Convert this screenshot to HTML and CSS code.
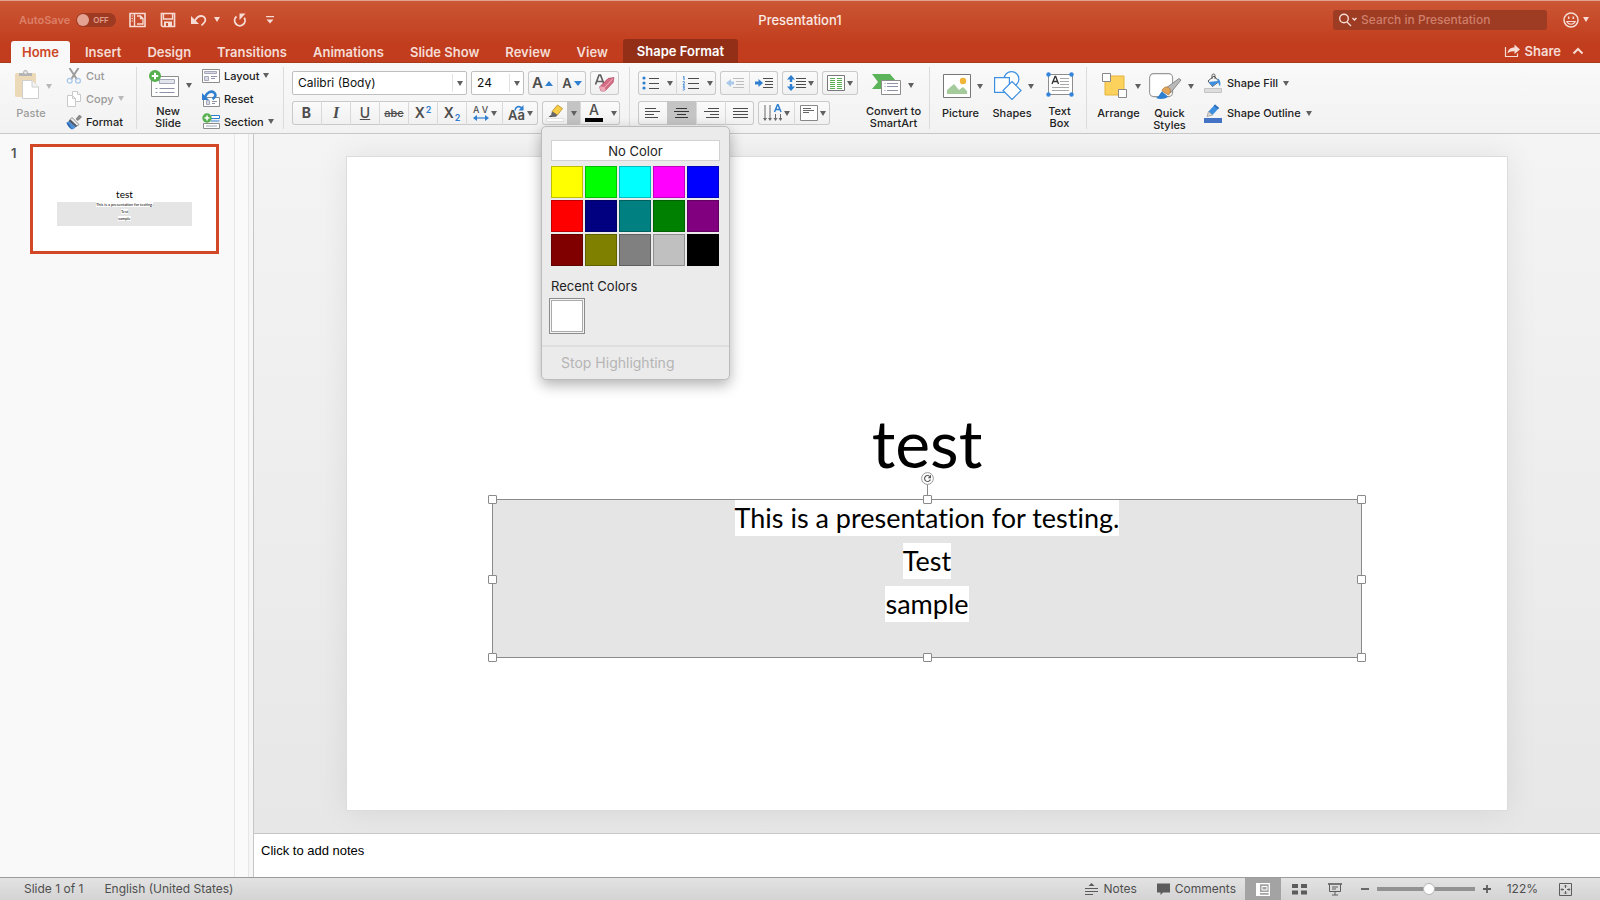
FILE: index.html
```html
<!DOCTYPE html>
<html lang="en">
	<head>
		<meta charset="utf-8">
		<title>Presentation1</title>
		<link rel="stylesheet" href="styles.css">
	</head>
	<body>
		<header class="header">
			<div class="titlebar">
				<div class="quick">
					<label class="autosave">AutoSave
						<input type="checkbox" disabled>
						<span class="switch">OFF</span>
					</label>
					<button type="button" class="quick_btn" aria-label="Presentation gallery"><svg width="17" height="16" viewBox="0 0 17 16"><path d="M1 1.500h15v13H1z" fill="none" stroke="#f6dcd5" stroke-width="1.600"/><path d="M5.500 1v13" stroke="#f6dcd5" stroke-width="1.400"/><path d="M2.500 4h1.500M2.500 6.500h1.500M2.500 9h1.500" stroke="#f6dcd5"/><path d="M8 4h3.500L14 6.500v5.500H8M11.500 4v2.700H14" fill="none" stroke="#f6dcd5" stroke-width="1.300"/></svg></button>
					<button type="button" class="quick_btn" aria-label="Save"><svg width="16" height="16" viewBox="0 0 16 16"><path d="M1.500 1.500h13v13h-12l-1-1z" fill="none" stroke="#f6dcd5" stroke-width="1.700"/><path d="M3.500 1.500v5.500h9V1.500" fill="none" stroke="#f6dcd5" stroke-width="1.300"/><path d="M4 9.500h8v5H4z" fill="#f6dcd5"/><path d="M6 11h2v3H6z" fill="#c44a2a"/></svg></button>
					<button type="button" class="quick_btn" aria-label="Undo"><svg width="16" height="16" viewBox="0 0 16 16"><path d="M0 4v8h8z" fill="#f6dcd5"/><path d="M4 8.500C6 5 9 3.500 11.500 4.200c3 .9 3.700 4.300 1.800 6.300L10.500 13.500" fill="none" stroke="#f6dcd5" stroke-width="1.800"/></svg></button>
					<button type="button" class="quick_arrow" aria-label="Undo history"><span class="caret caret-light"></span></button>
					<button type="button" class="quick_btn" aria-label="Repeat"><svg width="16" height="16" viewBox="0 0 16 16"><path d="M4.500 4.500A5.200 5.200 0 1 0 12.300 5.800" fill="none" stroke="#f6dcd5" stroke-width="1.900"/><path d="M7.500 1.500v6.500L13.500 1.500z" fill="#f6dcd5"/></svg></button>
					<button type="button" class="quick_btn customize" aria-label="Customize toolbar"><svg width="10" height="8" viewBox="0 0 10 8"><path d="M1 .5h8" stroke="#f6dcd5" stroke-width="1.400"/><path d="M1.500 3.500h7L5 7.500z" fill="#f6dcd5"/></svg></button>
				</div>
				<h1 class="doc_name">Presentation1</h1>
				<div class="title_right">
					<label class="search">
						<svg width="20" height="14" viewBox="0 0 20 14"><circle cx="6" cy="5.500" r="4.300" fill="none" stroke="#f6dcd5" stroke-width="1.400"/><path d="M9 9l4 4M14.500 5l2 2 2-2" fill="none" stroke="#f6dcd5" stroke-width="1.400"/></svg>
						<input type="search" placeholder="Search in Presentation" aria-label="Search in Presentation">
					</label>
					<button type="button" class="smile" aria-label="Feedback"><svg width="16" height="16" viewBox="0 0 16 16"><circle cx="8" cy="8" r="7" fill="none" stroke="#f6dcd5" stroke-width="1.500"/><path d="M5.700 4.500v2.500M10.300 4.500v2.500" stroke="#f6dcd5" stroke-width="1.500"/><path d="M3.800 9.500c1.600 3.600 6.800 3.600 8.400 0z" fill="none" stroke="#f6dcd5" stroke-width="1.100"/></svg><span class="caret caret-light"></span></button>
				</div>
			</div>
			<nav class="tabs">
				<ul>
					<li class="on"><button type="button">Home</button></li>
					<li><button type="button">Insert</button></li>
					<li><button type="button">Design</button></li>
					<li><button type="button">Transitions</button></li>
					<li><button type="button">Animations</button></li>
					<li><button type="button">Slide Show</button></li>
					<li><button type="button">Review</button></li>
					<li><button type="button">View</button></li>
					<li class="context"><button type="button">Shape Format</button></li>
				</ul>
				<div class="share">
					<button type="button"><svg width="17" height="14" viewBox="0 0 17 14"><path d="M1.500 3v9.500h12V9.500" fill="none" stroke="#f6dcd5" stroke-width="1.200"/><path d="M3.500 9.500C4 5.500 6.500 3.500 10.500 3.500V.500L16 5.500l-5.500 4.500V7.200C7.500 7 5.300 7.600 3.500 9.500z" fill="#f6dcd5"/></svg>Share</button>
					<button type="button" aria-label="Collapse ribbon"><svg width="12" height="8" viewBox="0 0 12 8"><path d="M1.500 6.500L6 2l4.500 4.500" fill="none" stroke="#f6dcd5" stroke-width="2"/></svg></button>
				</div>
			</nav>
		</header>

		<div class="ribbon">
			<div class="group group-clipboard">
				<button type="button" class="big paste" disabled>
					<span class="big_icon"><svg width="26" height="32" viewBox="0 0 26 32"><rect x="1" y="4" width="21" height="24" rx="1.500" fill="#ecd9b8"/><path d="M5 7V4h4c0-4 5-4 5 0h4v3z" fill="#b4b4b4"/><circle cx="11.500" cy="3.500" r="1.200" fill="#f6f6f6"/><path d="M8.500 11.500H18l6.500 6.500v11.500h-16z" fill="#fff" stroke="#cfcfcf"/><path d="M18 11.500V18h6.500" fill="#f3f3f3" stroke="#cfcfcf"/></svg><span class="caret caret-dim"></span></span>
					Paste
				</button>
				<div class="stack">
					<button type="button" disabled><svg width="16" height="16" viewBox="0 0 16 16"><path d="M3.500 0L11 11.500M12.500 0L5 11.500" stroke="#9a9a9a" stroke-width="1.900"/><circle cx="3.700" cy="12.700" r="2.400" fill="none" stroke="#a9c7ea" stroke-width="1.300"/><circle cx="12" cy="12.700" r="2.400" fill="none" stroke="#a9c7ea" stroke-width="1.300"/></svg>Cut</button>
					<button type="button" disabled><svg width="16" height="16" viewBox="0 0 16 16"><path d="M6.500 4.500V.500h5l3 3v7H9.500" fill="#fff" stroke="#c9c9c9"/><path d="M1.500 4.500h5l3 3v8h-8zM6.500 4.500v3h3M11.500.500v3h3" fill="#fff" stroke="#c9c9c9"/></svg>Copy<span class="caret caret-dim"></span></button>
					<button type="button"><svg width="16" height="16" viewBox="0 0 16 16"><path d="M10 5l3.500-4L15.500 3 12 6.500z" fill="#8b8b8b" stroke="#666" stroke-width=".6"/><path d="M6 3.500l7 7-2 1.500-7-6.500z" fill="#e8e8e8" stroke="#777" stroke-width=".8"/><path d="M4 5.500l7 6.500c-1.500 1.500-3 3-5 3.500C3.500 14 1.500 11.500.500 8.500 2 8 3 7 4 5.500z" fill="#4e8fd6"/><path d="M4 5.500l7 6.500-1 1L2.800 7z" fill="#565656"/><path d="M6 15.500C3.500 14 1.500 11.500.500 8.500L3 10z" fill="#235fa8"/></svg>Format</button>
				</div>
			</div>

			<div class="group group-slides">
				<button type="button" class="big newslide">
					<span class="big_icon"><svg width="31" height="28" viewBox="0 0 31 28"><path d="M2.500 6.500h27v20h-27z" fill="#fff" stroke="#8d8d8d"/><path d="M10.500 9.500h15v4h-15z" fill="#e4e6ee" stroke="#a4a8ba"/><path d="M6.500 18.500h2M10.500 18.500h15M6.500 22.500h2M10.500 22.500h15" stroke="#8e93a8"/><circle cx="6" cy="6" r="6" fill="#56b04f"/><path d="M6 2.800v6.400M2.800 6h6.400" stroke="#fff" stroke-width="2"/></svg><span class="caret"></span></span>
					New<br>Slide
				</button>
				<div class="stack">
					<button type="button"><svg width="18" height="16" viewBox="0 0 18 16"><path d="M.5 1.500h17v13H.5z" fill="#fff" stroke="#8d8d8d"/><path d="M2.500 3.500h12v2h-12z" fill="#d7d9e4" stroke="#a4a8ba"/><path d="M2.500 8.500h4v4h-4z" fill="#d7d9e4" stroke="#a4a8ba"/><path d="M9 8.500h6M9 10.500h4" stroke="#8e93a8"/></svg>Layout<span class="caret"></span></button>
					<button type="button"><svg width="18" height="17" viewBox="0 0 18 17"><path d="M1.500 7.500h16v9h-16z" fill="#fff" stroke="#8d8d8d"/><path d="M4.500 10.500h3v4h-3z" fill="#d7d9e4" stroke="#a4a8ba"/><path d="M10 11.500h5M10 13.500h3" stroke="#8e93a8"/><path d="M0 3v7h7z" fill="#2f7fd0"/><path d="M3 7C5 2 9.500.500 12 2.500s1.500 5-1.500 6.500" fill="none" stroke="#2f7fd0" stroke-width="2.600"/></svg>Reset</button>
					<button type="button"><svg width="18" height="17" viewBox="0 0 18 17"><path d="M1.500 10.500h16v5h-16z" fill="#fff" stroke="#8d8d8d"/><path d="M4 13h11" stroke="#a4a8ba"/><path d="M9 2.500h8.500v3H9M9 8h8.500" fill="#fff" stroke="#2f7fd0"/><circle cx="5" cy="5" r="4.700" fill="#56b04f"/><path d="M5 2.500v5M2.500 5h5" stroke="#fff" stroke-width="1.500"/></svg>Section<span class="caret"></span></button>
				</div>
			</div>

			<div class="group group-font">
				<div class="tool_row">
					<div class="combo combo-font">
						<select aria-label="Font"><option>Calibri (Body)</option></select>
						<span class="caret"></span>
					</div>
					<div class="combo combo-size">
						<select aria-label="Font size"><option>24</option></select>
						<span class="caret"></span>
					</div>
					<div class="seg">
						<button type="button" class="w29 letter" aria-label="Increase font size">A<svg width="8" height="5" viewBox="0 0 8 5"><path d="M0 5h8L4 0z" fill="#2f7fd0"/></svg></button>
						<button type="button" class="w29 letter small" aria-label="Decrease font size">A<svg width="8" height="5" viewBox="0 0 8 5"><path d="M0 0h8L4 5z" fill="#2f7fd0"/></svg></button>
					</div>
					<div class="seg">
						<button type="button" class="w29" aria-label="Clear formatting"><svg width="22" height="20" viewBox="0 0 22 20"><path d="M1.500 11.500L5 2h1.500L10 11M3 8.500h5.500" fill="none" stroke="#606060" stroke-width="1.700"/><path d="M5.500 14L14 5.500l6-1L19 9.500 11 18H7z" fill="#d56c83" stroke="#a84a60" stroke-width=".7"/><path d="M5.500 14l5 .5 8.500-9M10.500 14.500L11 18" fill="none" stroke="#f3b7c4"/><path d="M5.500 14l5 .5.5 3.500H7z" fill="#eda7b6"/></svg></button>
					</div>
				</div>
				<div class="tool_row">
					<div class="seg">
						<button type="button" class="w29"><b>B</b></button>
						<button type="button" class="w29 serif"><i>I</i></button>
						<button type="button" class="w29"><u>U</u></button>
						<button type="button" class="w29 strike"><s>abc</s></button>
						<button type="button" class="w29 script">X<sup>2</sup></button>
						<button type="button" class="w29 script">X<sub>2</sub></button>
						<button type="button" class="w36 kern" aria-label="Character spacing"><span>A V<svg width="16" height="6" viewBox="0 0 16 6"><path d="M2 3h12" stroke="#2f7fd0" stroke-width="1.200"/><path d="M0 3l4-3v6zM16 3l-4-3v6z" fill="#2f7fd0"/></svg></span><span class="caret"></span></button>
						<button type="button" class="w36 case" aria-label="Change case"><span>Aa<svg width="10" height="7" viewBox="0 0 10 7"><path d="M1 5.500C1.500 1.500 5 .5 8 3" fill="none" stroke="#2f7fd0" stroke-width="1.600"/><path d="M9.500 0v5.500H4.500z" fill="#2f7fd0"/></svg></span><span class="caret"></span></button>
					</div>
					<div class="seg seg-popup">
						<button type="button" class="w25" aria-label="Highlight color"><svg width="18" height="18" viewBox="0 0 18 18"><path d="M6 7.500L11.500 1 16.500 4.500 11.500 11z" fill="#f7cd46" stroke="#b38c2a" stroke-width=".8"/><path d="M6 7.500l5.500 3.500-1.500 1.800-2.500.2-2.500-2z" fill="#666"/><path d="M5 11l2.500 2H2.500z" fill="#4f4f4f"/><path d="M.5 14.500h17v3H.5z" fill="#fff" stroke="#ddd" stroke-width=".8"/></svg></button>
						<button type="button" class="w13 on" aria-label="Highlight menu"><span class="caret"></span></button>
						<button type="button" class="w27 fontcolor" aria-label="Font color">A</button>
						<button type="button" class="w13" aria-label="Font color menu"><span class="caret"></span></button>
						<div class="popup">
							<div class="popup_body">
								<button type="button" class="nocolor">No Color</button>
								<div class="swatches">
									<button type="button" class="c-yellow" aria-label="Yellow"></button>
									<button type="button" class="c-lime" aria-label="Bright green"></button>
									<button type="button" class="c-cyan" aria-label="Turquoise"></button>
									<button type="button" class="c-pink" aria-label="Pink"></button>
									<button type="button" class="c-blue" aria-label="Blue"></button>
									<button type="button" class="c-red" aria-label="Red"></button>
									<button type="button" class="c-navy" aria-label="Dark blue"></button>
									<button type="button" class="c-teal" aria-label="Teal"></button>
									<button type="button" class="c-green" aria-label="Green"></button>
									<button type="button" class="c-violet" aria-label="Violet"></button>
									<button type="button" class="c-maroon" aria-label="Dark red"></button>
									<button type="button" class="c-olive" aria-label="Dark yellow"></button>
									<button type="button" class="c-gray" aria-label="Gray"></button>
									<button type="button" class="c-silver" aria-label="Light gray"></button>
									<button type="button" class="c-black" aria-label="Black"></button>
								</div>
								<p>Recent Colors</p>
								<button type="button" class="recent" aria-label="White"></button>
							</div>
							<button type="button" class="stop" disabled>Stop Highlighting</button>
						</div>
					</div>
				</div>
			</div>

			<div class="group group-para">
				<div class="para_tools">
					<div class="tool_row">
						<div class="seg">
							<button type="button" class="w25" aria-label="Bullets"><svg width="17" height="14" viewBox="0 0 17 14"><circle cx="2" cy="2" r="1.600" fill="#2f7fd0"/><circle cx="2" cy="7" r="1.600" fill="#2f7fd0"/><circle cx="2" cy="12" r="1.600" fill="#2f7fd0"/><path d="M7 2.500h10M7 7.500h10M7 12.500h10" stroke="#4c4c4c"/></svg></button>
							<button type="button" class="w13" aria-label="Bullet styles"><span class="caret"></span></button>
							<button type="button" class="w27" aria-label="Numbering"><svg width="17" height="15" viewBox="0 0 17 15"><path d="M1 1l1-.5V4M.7 5.800c2-.8 2.500.5 1.200 1.700L1 9h2M.8 10.800h1.800L1.500 12.200c1.800.4 1.200 2.200-.8 1.800" fill="none" stroke="#2f7fd0"/><path d="M6 2.500h11M6 7.500h11M6 12.500h11" stroke="#4c4c4c"/></svg></button>
							<button type="button" class="w13" aria-label="Number styles"><span class="caret"></span></button>
						</div>
						<div class="seg">
							<button type="button" class="w29" disabled aria-label="Decrease indent"><svg width="18" height="12" viewBox="0 0 18 12"><path d="M0 6l5-4v2.500h3v3H5V10z" fill="#a9c9ea"/><path d="M7 1.500h11M10 4.500h8M10 7.500h8M7 10.500h11" stroke="#bdbdbd"/></svg></button>
							<button type="button" class="w29" aria-label="Increase indent"><svg width="18" height="12" viewBox="0 0 18 12"><path d="M8 6L3.500 2v2.500H0v3h3.500V10z" fill="#2f7fd0"/><path d="M8 1.500h10M10 4.500h8M10 7.500h8M8 10.500h10" stroke="#4c4c4c"/></svg></button>
						</div>
						<div class="seg">
							<button type="button" class="w36" aria-label="Line spacing"><svg width="19" height="16" viewBox="0 0 19 16"><path d="M4 0L0 4.500h2.800V7h2.400V4.500H8zM4 16L0 11.500h2.800V9h2.400v2.500H8z" fill="#2f7fd0"/><path d="M9 3.500h10M9 6.500h10M9 9.500h10M9 12.500h10" stroke="#4c4c4c"/></svg><span class="caret"></span></button>
						</div>
						<div class="seg">
							<button type="button" class="w36" aria-label="Columns"><svg width="18" height="16" viewBox="0 0 18 16"><path d="M.5.5h17v15H.5z" fill="#fff" stroke="#777"/><path d="M3 3.500h5M3 5.500h5M3 7.500h5M3 9.500h5M3 11.500h5M3 13.500h5M10 3.500h5M10 5.500h5M10 7.500h5M10 9.500h5M10 11.500h5M10 13.500h5" stroke="#56b04f"/></svg><span class="caret"></span></button>
						</div>
					</div>
					<div class="tool_row">
						<div class="seg">
							<button type="button" class="w29" aria-label="Align left"><svg width="15" height="12" viewBox="0 0 15 12"><path d="M0 1.500h11M0 4.500h15M0 7.500h9M0 10.500h13" stroke="#4c4c4c"/></svg></button>
							<button type="button" class="w29 on" aria-label="Center"><svg width="15" height="12" viewBox="0 0 15 12"><path d="M2 1.500h11M0 4.500h15M3 7.500h9M1 10.500h13" stroke="#333"/></svg></button>
							<button type="button" class="w29" aria-label="Align right"><svg width="15" height="12" viewBox="0 0 15 12"><path d="M4 1.500h11M0 4.500h15M6 7.500h9M2 10.500h13" stroke="#4c4c4c"/></svg></button>
							<button type="button" class="w29" aria-label="Justify"><svg width="15" height="12" viewBox="0 0 15 12"><path d="M0 1.500h15M0 4.500h15M0 7.500h15M0 10.500h15" stroke="#4c4c4c"/></svg></button>
						</div>
						<div class="seg">
							<button type="button" class="w36" aria-label="Text direction"><svg width="19" height="18" viewBox="0 0 19 18"><path d="M2 1v14M7 1v14M12.500 10v5M17.500 10v5" stroke="#6a6a6a"/><path d="M0 14h4l-2 3zM5 14h4l-2 3zM10.500 14h4l-2 3zM15.500 14h4l-2 3z" fill="#6a6a6a"/><path d="M11.500 8L14.500.800h.6L18 8M12.500 5.500h4.700" fill="none" stroke="#2f7fd0" stroke-width="1.500"/></svg><span class="caret"></span></button>
							<button type="button" class="w36" aria-label="Align text"><svg width="18" height="16" viewBox="0 0 18 16"><path d="M.5.5h17v15H.5z" fill="#fff" stroke="#888"/><path d="M3 3.500h8M3 5.500h11M3 7.500h6" stroke="#666"/></svg><span class="caret"></span></button>
						</div>
					</div>
				</div>
				<button type="button" class="big smartart">
					<span class="big_icon"><svg width="30" height="28" viewBox="0 0 30 28"><path d="M0 4h18l6 7-5 8H0l6-7z" fill="#5cb45a"/><path d="M9.500 10.500h19v14h-19z" fill="#fff" stroke="#8d8d8d"/><path d="M12.500 13.500h1M15 13.500h11M12.500 16.500h1M15 16.500h11M12.500 20.500h1M15 20.500h11" stroke="#8e93a8"/></svg><span class="caret"></span></span>
					Convert to<br>SmartArt
				</button>
			</div>

			<div class="group group-insert">
				<button type="button" class="big picture">
					<span class="big_icon"><svg width="28" height="28" viewBox="0 0 28 28"><path d="M.5 3.500h27v23H.5z" fill="#fff" stroke="#777"/><path d="M4 23v-4l7-6 5 6 4-3 4 4v3z" fill="#a5cb9c"/><circle cx="20" cy="10" r="3.200" fill="#f0b437"/></svg><span class="caret"></span></span>
					Picture
				</button>
				<button type="button" class="big shapes">
					<span class="big_icon"><svg width="28" height="30" viewBox="0 0 28 30"><circle cx="17.500" cy="9" r="7.400" fill="#fff" stroke="#3d8fe0" stroke-width="1.200"/><path d="M.6 7.600h14.800v14.800H.6z" fill="#fff" stroke="#3d8fe0" stroke-width="1.200"/><path d="M18 11.500l9 9-9 9-9-9z" fill="#fff" stroke="#3d8fe0" stroke-width="1.200"/></svg><span class="caret"></span></span>
					Shapes
				</button>
				<button type="button" class="big textbox">
					<span class="big_icon"><svg width="28" height="28" viewBox="0 0 28 28"><path d="M2.500 4.500h24v20h-24z" fill="#fff" stroke="#8d8d8d"/><path d="M6 14l3-7.500h.7L12.500 14M7 11.500h4.500" fill="none" stroke="#333" stroke-width="1.300"/><path d="M14 8.500h9M14 11.500h9M14 14.500h9M6 17.500h17M6 20.500h17" stroke="#a9a9a9"/><g fill="#3585dd"><circle cx="2.500" cy="4.500" r="2.200"/><circle cx="25.500" cy="4.500" r="2.200"/><circle cx="2.500" cy="24.500" r="2.200"/><circle cx="25.500" cy="24.500" r="2.200"/></g></svg></span>
					Text<br>Box
				</button>
			</div>

			<div class="group group-draw">
				<button type="button" class="big arrange">
					<span class="big_icon"><svg width="28" height="28" viewBox="0 0 28 28"><path d="M4 5h19v19H4z" fill="#fcd15c" stroke="#e5b53e"/><path d="M1.500 2.500h8v8h-8z" fill="#fff" stroke="#888"/><path d="M17.500 18.500h8v8h-8z" fill="#fff" stroke="#888"/></svg><span class="caret"></span></span>
					Arrange
				</button>
				<button type="button" class="big quickstyles">
					<span class="big_icon"><svg width="33" height="30" viewBox="0 0 33 30"><rect x=".6" y="3.600" width="23" height="23" rx="4" fill="#fff" stroke="#999" stroke-width="1.100"/><path d="M17 18L30 8.500l2 1.500-10.500 13z" fill="#b9b9b9" stroke="#777" stroke-width=".8"/><path d="M13 21c1-3.500 4-5 6.500-3.500s2.500 5 0 7.500z" fill="#e2a55a" stroke="#a8712f" stroke-width=".7"/><path d="M7 28c3-1 3.500-4.500 6-6.500l6 5c-3 3-8.500 3-12 1.500z" fill="#2f7fd0"/></svg><span class="caret"></span></span>
					Quick<br>Styles
				</button>
				<div class="fills">
					<button type="button"><svg width="18" height="20" viewBox="0 0 18 20"><path d="M.5 15.500h17v4H.5z" fill="#ddd" stroke="#c4c4c4"/><path d="M4 8l6-5 5 5.500-6.500 5z" fill="#f7f7f7" stroke="#555"/><path d="M4.500 9l9-1 1 .700-6 4.500z" fill="#3d8fe0"/><path d="M8 6V2.500c0-2 3-2 3 0V6" fill="none" stroke="#555"/><path d="M13.500 5.500c2.500.5 3.500 4 2.500 8-1.500-2-2-4-2.500-8z" fill="#3d8fe0"/></svg>Shape Fill<span class="caret"></span></button>
					<button type="button"><svg width="18" height="20" viewBox="0 0 18 20"><path d="M0 15h18v5H0z" fill="#4472c4"/><path d="M4.500 8.500l6.500-7 4 3.500-6.500 7z" fill="#3d8fe0"/><path d="M9.800 2.800L11 1.500l4 3.500-1.200 1.300z" fill="#2f6cb5"/><path d="M4.500 8.500l4 3.500-5.500 1.500z" fill="#d9d9d9" stroke="#888" stroke-width=".6"/></svg>Shape Outline<span class="caret"></span></button>
				</div>
			</div>
		</div>

		<main class="workspace">
			<aside class="panel">
				<ol>
					<li>
						<span class="num">1</span>
						<button type="button" class="thumb" aria-label="Slide 1">
							<span class="thumb_title">test</span>
							<span class="thumb_body"><span>This is a presentation for testing.</span><span>Test</span><span>sample</span></span>
						</button>
					</li>
				</ol>
				<div class="scroll"></div>
			</aside>
			<section class="editor">
				<div class="canvas">
					<div class="slide">
						<h2>test</h2>
						<div class="selection">
							<p><mark>This is a presentation for testing.</mark></p>
							<p><mark>Test</mark></p>
							<p><mark>sample</mark></p>
							<span class="handle nw"></span>
							<span class="handle n"></span>
							<span class="handle ne"></span>
							<span class="handle w"></span>
							<span class="handle e"></span>
							<span class="handle sw"></span>
							<span class="handle s"></span>
							<span class="handle se"></span>
							<svg class="rotate" width="13" height="24" viewBox="0 0 13 24"><path d="M6.500 12v12" stroke="#8a8a8a"/><circle cx="6.500" cy="6.500" r="5.900" fill="#fff" stroke="#999"/><path d="M8.800 4.500A3 3 0 1 0 9.400 7.500" fill="none" stroke="#555" stroke-width="1.100"/><path d="M10 2.800v3.400H6.800z" fill="#555"/></svg>
						</div>
					</div>
				</div>
				<textarea class="notes" placeholder="Click to add notes" aria-label="Notes"></textarea>
			</section>
		</main>

		<footer class="status">
			<span class="status_slide">Slide 1 of 1</span>
			<span>English (United States)</span>
			<div class="status_right">
				<button type="button" class="status_text"><svg width="13" height="12" viewBox="0 0 13 12"><path d="M3.500 3L6.500 0l3 3z" fill="#5c5c5c"/><path d="M0 5.500h13M0 8.500h13M0 11.500h8" stroke="#5c5c5c"/></svg>Notes</button>
				<button type="button" class="status_text comments"><svg width="13" height="12" viewBox="0 0 13 12"><path d="M0 .5h13v9H6L3.500 12V9.500H0z" fill="#5c5c5c"/></svg>Comments</button>
				<button type="button" class="view on" aria-label="Normal"><svg width="14" height="13" viewBox="0 0 14 13"><path d="M.7.700h12.600v11.600H.7z" fill="none" stroke="#fff" stroke-width="1.300"/><path d="M0 0h4v13H0z" fill="#fff"/><path d="M6 3.500h5v3.500H6zM4 9.500h9" fill="none" stroke="#fff"/></svg></button>
				<button type="button" class="view" aria-label="Slide sorter"><svg width="15" height="12" viewBox="0 0 15 12"><path d="M0 1h6v4H0zM9 1h6v4H9zM0 7.500h6v4H0zM9 7.500h6v4H9z" fill="#5c5c5c"/></svg></button>
				<button type="button" class="view" aria-label="Slide show"><svg width="14" height="13" viewBox="0 0 14 13"><path d="M0 1h14" stroke="#5c5c5c" stroke-width="1.600"/><path d="M1.500 1.500v7h11v-7M7 8.500V12M4 12h6M4 4h6M4 6h4" fill="none" stroke="#5c5c5c"/></svg></button>
				<button type="button" class="zoom_btn zoom_out" aria-label="Zoom out"><svg width="8" height="8" viewBox="0 0 8 8"><path d="M0 4h8" stroke="#5c5c5c" stroke-width="1.800"/></svg></button>
				<input type="range" class="zoom" min="0" max="100" value="54" aria-label="Zoom">
				<button type="button" class="zoom_btn" aria-label="Zoom in"><svg width="8" height="8" viewBox="0 0 8 8"><path d="M0 4h8M4 0v8" stroke="#5c5c5c" stroke-width="1.800"/></svg></button>
				<button type="button" class="percent">122%</button>
				<button type="button" class="fit" aria-label="Fit slide"><svg width="13" height="13" viewBox="0 0 13 13"><path d="M.5.5h12v12H.5z" fill="none" stroke="#5c5c5c"/><path d="M6.500 2v3M6.500 8v3M2 6.500h3M8 6.500h3" stroke="#5c5c5c"/><path d="M5 3.500L6.500 2 8 3.500M5 9.500L6.500 11 8 9.500M3.500 5L2 6.500 3.500 8M9.500 5L11 6.500 9.500 8" fill="none" stroke="#5c5c5c" stroke-width=".7"/></svg></button>
			</div>
		</footer>
	</body>
</html>
```

FILE: styles.css
```css
* { box-sizing:border-box; }
body,h1,h2,p,ul,ol,li,button { margin:0; padding:0; }
ul,ol { list-style:none; }
body { display:flex; flex-direction:column; min-height:100vh; font-family:Inter, "Liberation Sans", sans-serif; font-size:11px; line-height:12px; color:#222; background:#f3f3f3; }
button,input,select,textarea { font:inherit; color:inherit; }
button { border:0; background:none; }
svg { display:block; flex:none; }
.caret { display:block; flex:none; width:0; height:0; border:3px solid transparent; border-top:5px solid #606060; border-bottom:0; }
.caret-light { border-top-color:#f6dcd5; }
.caret-dim { border-top-color:#b9b9b9; }

/* title bar and tabs */
.header { border-top:1px solid #e0a291; background:linear-gradient(#cb5635, #c13d1d 70%); color:#f6dcd5; }
.titlebar { display:grid; grid-template-columns:1fr auto 1fr; align-items:center; height:37px; }
.quick { display:flex; align-items:center; padding-left:19px; }
.autosave { display:flex; align-items:center; gap:6px; margin-right:11px; font-weight:600; line-height:14px; color:#db8068; }
.autosave input { position:absolute; opacity:0; }
.switch { display:flex; align-items:center; width:40px; height:14px; border-radius:7px; background:#9e3a22; font-size:8px; color:#e0a090; }
.switch:before { width:12px; height:12px; margin:0 4px 0 1px; border-radius:50%; background:#e4a292; content:""; }
.quick_btn { display:flex; justify-content:center; width:20px; margin-right:11px; }
.quick_arrow { margin:0 10px 0 -6px; }
.customize { margin-left:-1px; }
.doc_name { font-size:13px; font-weight:500; line-height:16px; color:#fbeae5; }
.title_right { display:flex; align-items:center; justify-content:flex-end; padding-right:11px; }
.search { display:flex; align-items:center; width:214px; height:20px; padding-left:5px; border-radius:3px; background:#9e3b23; }
.search input { flex:1; min-width:0; padding:0 3px; border:0; outline:0; background:none; font-size:12px; font-weight:500; }
.search input::placeholder { color:#cf7f6a; opacity:1; }
.smile { display:flex; align-items:center; gap:4px; margin-left:16px; }
.tabs { display:flex; justify-content:space-between; height:25px; box-shadow:inset 0 -1px #a93a1c; font-size:13px; font-weight:600; }
.tabs ul { display:flex; align-items:flex-end; gap:4px; padding-left:11px; }
.tabs li button { display:block; height:22px; padding:0 11px; border-radius:3px 3px 0 0; color:#f6dcd5; }
.tabs li.on button { background:#f8f8f8; color:#cc4727; }
.tabs li.context button { height:24px; padding:0 14px; background:#932f17; color:#fff; }
.share { display:flex; align-items:center; gap:11px; padding-right:16px; }
.share button { display:flex; align-items:center; gap:4px; color:#f6dcd5; }

/* ribbon */
.ribbon { display:flex; height:71px; border-bottom:1px solid #c8c8c8; background:linear-gradient(#f9f9f9, #f2f2f2); font-weight:500; }
.group { display:flex; position:relative; margin:4px 0 4px; border-right:1px solid #dcdcdc; }
.group:last-child { border-right:0; }
.big { display:flex; flex-direction:column; align-items:center; color:#222; white-space:nowrap; }
.big_icon { display:flex; align-items:center; gap:6px; height:30px; margin:3px 0 7px; }
.big .caret { margin:3px -4px 0 0; }
.stack { display:flex; flex-direction:column; margin:-3px 0; }
.stack button { display:flex; flex:none; align-items:center; gap:4px; height:23px; color:#222; }
button:disabled { color:#9b9b9b; }
.group-clipboard { width:137px; }
.paste { width:62px; }
.paste:disabled,.stack button:disabled { color:#9b9b9b; }
.group-clipboard .stack { margin-left:4px; }
.group-slides { width:147px; }
.newslide { width:62px; }
.group-slides .stack { margin-left:3px; }
.group-font,.para_tools { display:flex; flex-direction:column; gap:6px; padding-top:4px; }
.group-font { width:346px; padding-left:8px; }
.tool_row { display:flex; gap:4px; }
.combo { position:relative; height:24px; }
.combo select { width:100%; height:24px; padding:0 5px; border:1px solid #bfbfbf; border-radius:2px; appearance:none; background:#fff; font-size:12px; font-weight:400; color:#111; }
.combo .caret { position:absolute; right:4px; top:10px; }
.combo:after { position:absolute; right:14px; top:3px; height:18px; border-right:1px solid #e2e2e2; content:""; }
.combo-font { width:175px; }
.combo-size { width:53px; }
.seg { display:flex; height:24px; border-radius:3px; background:linear-gradient(#fbfbfb, #f0f0f0); box-shadow:inset 0 0 0 1px #c9c9c9; color:#4c4c4c; }
.seg > button { display:flex; align-items:center; justify-content:center; gap:2px; color:#4c4c4c; }
.seg > button + button { border-left:1px solid #d9d9d9; }
.seg > button.on { border:0; background:#c4c4c4; }
.seg > button.w13 { border-left:0; }
.w13 { width:13px; }
.w25 { width:25px; }
.w27 { width:27px; }
.w29 { width:29px; }
.w36 { width:36px; }
.letter { font-size:15px; font-weight:600; }
.seg .small { font-size:13px; }
.seg b,.seg u { font-size:14px; font-weight:700; }
.seg u { font-weight:500; }
.serif { font-family:"Liberation Serif", serif; font-size:16px; font-weight:700; }
.strike { font-size:11px; }
.seg > .script { gap:1px; font-size:14px; font-weight:600; }
.script sup,.script sub { font-size:9px; line-height:9px; color:#2f7fd0; }
.script sup { margin-bottom:8px; }
.script sub { margin-top:8px; }
.kern { font-size:9px; line-height:10px; }
.case span:first-child { position:relative; padding-top:4px; font-size:13px; font-weight:600; }
.case svg { position:absolute; left:6px; top:0; }
.fontcolor { flex-direction:column; font-size:14px; font-weight:500; }
.fontcolor:after { width:18px; height:4px; background:#000; content:""; }
.group-para { width:300px; padding-left:8px; }
.smartart { width:76px; margin:0 0 0 auto; }
.smartart .big_icon { padding-right:5px; }
.group-insert { width:157px; padding-left:5px; }
.picture { width:51px; }
.shapes { width:52px; }
.textbox { width:43px; }
.group-draw { padding-left:6px; }
.arrange,.quickstyles { width:51px; }
.fills { display:flex; flex-direction:column; padding:1px 0 0 9px; }
.fills button { display:flex; align-items:center; gap:5px; height:30px; }

/* highlight menu */
.seg-popup { position:relative; }
.popup { position:absolute; left:-1px; top:25px; z-index:10; width:189px; border:1px solid #bcbcbc; border-radius:5px; background:#ebebeb; box-shadow:0 5px 14px rgba(0,0,0,.3); font-size:13px; font-weight:400; line-height:16px; color:#222; }
.popup_body { padding:13px 9px 13px; }
.nocolor { display:block; width:100%; height:21px; border:1px solid #d2d2d2; background:#fff; }
.swatches { display:grid; grid-template-columns:repeat(5, 32px); gap:2px; margin:5px 0 12px; }
.swatches button { height:32px; border:1px solid rgba(0,0,0,.25); }
.c-yellow { background:#ff0; }
.c-lime { background:#0f0; }
.c-cyan { background:#0ff; }
.c-pink { background:#f0f; }
.c-blue { background:#00f; }
.c-red { background:#f00; }
.c-navy { background:#000080; }
.c-teal { background:#008080; }
.c-green { background:#008000; }
.c-violet { background:#800080; }
.c-maroon { background:#800000; }
.c-olive { background:#808000; }
.c-gray { background:#808080; }
.c-silver { background:#c0c0c0; }
.c-black { background:#000; }
.recent { display:block; width:32px; height:32px; margin-top:6px; border:1px solid #aaa; background:#fff; box-shadow:0 0 0 1px #f4f4f4, 0 0 0 2px #8b8b8b; }
.stop { display:block; width:100%; height:34px; padding-left:19px; border-top:2px solid #dedede; font-size:14px; text-align:left; }
.popup .stop:disabled { color:#b5b5b5; }

/* slides panel, canvas, notes */
.workspace { display:flex; flex:1; }
.panel { display:flex; width:254px; border-right:1px solid #c6c6c6; background:#f9f9f9; }
.panel ol { flex:1; padding:10px 0 0 11px; }
.panel li { display:flex; gap:12px; }
.num { width:7px; padding-top:3px; font-size:13px; font-weight:600; color:#555; }
.thumb { display:flex; flex-direction:column; align-items:center; width:189px; height:110px; padding-top:40px; border:3px solid #d24726; background:#fff; font-family:Lato, sans-serif; color:#000; }
.thumb_title { font-size:10px; line-height:15px; }
.thumb_body { display:flex; flex-direction:column; align-items:center; width:135px; height:24px; background:#e5e5e5; font-size:4px; line-height:5px; }
.thumb_body span { margin-bottom:2px; background:#fff; }
.scroll { width:19px; border-left:1px solid #e6e6e6; background:linear-gradient(90deg, #fafafa 13px, #e6e6e6 13px, #e6e6e6 14px, #f6f6f6 14px); }
.editor { display:flex; flex:1; flex-direction:column; min-width:0; }
.canvas { flex:1; padding:22px 92px; background:linear-gradient(#f4f4f4, #e7e7e7); }
.slide { display:grid; grid-template-rows:342fr 159fr 152fr; justify-items:center; height:100%; border:1px solid #dcdcdc; background:#fff; box-shadow:0 0 30px rgba(0,0,0,.08); font-family:Lato, sans-serif; font-variant-ligatures:none; color:#000; }
.slide h2 { align-self:end; padding-bottom:16px; font-size:66px; font-weight:400; line-height:80px; }
.selection { position:relative; width:75%; border:1px solid #8a8a8a; background:#e5e5e5; font-size:27px; line-height:36px; text-align:center; }
.selection p { height:43px; }
.selection mark { display:inline-block; background:#fff; color:#000; }
.handle { position:absolute; width:9px; height:9px; border:1px solid #8a8a8a; border-radius:1px; background:#fff; }
.nw,.n,.ne { top:-5px; }
.w,.e { top:calc(50% - 4px); }
.sw,.s,.se { bottom:-5px; }
.nw,.w,.sw { left:-5px; }
.n,.s { left:calc(50% - 4px); }
.ne,.e,.se { right:-5px; }
.rotate { position:absolute; left:calc(50% - 6px); top:-28px; }
.notes { display:block; height:44px; padding:8px 7px; border:0; border-top:1px solid #c6c6c6; outline:0; resize:none; background:#fff; font:13px/18px "Liberation Sans", sans-serif; }
.notes::placeholder { color:#000; opacity:1; }

/* status bar */
.status { display:flex; align-items:center; gap:21px; height:23px; border-top:1px solid #9c9c9c; background:linear-gradient(#e3e3e3, #d3d3d3); font-size:12px; color:#4f4f4f; }
.status_slide { padding-left:24px; }
.status_right { display:flex; align-items:center; height:22px; margin-left:auto; padding-right:28px; }
.status_text { display:flex; align-items:center; gap:5px; margin-right:20px; }
.comments { margin-right:9px; }
.view { display:flex; align-items:center; justify-content:center; width:36px; height:22px; }
.view.on { background:#a3a3a3; }
.zoom_btn { padding:4px; }
.zoom_out { margin-left:4px; }
.zoom { width:98px; height:16px; margin:0 4px; appearance:none; background:linear-gradient(#929292, #929292) center / 100% 4px no-repeat; }
.zoom::-webkit-slider-thumb { appearance:none; width:12px; height:12px; border:1px solid #b5b5b5; border-radius:50%; background:#fff; }
.percent { width:43px; text-align:right; }
.fit { margin-left:21px; }
```
